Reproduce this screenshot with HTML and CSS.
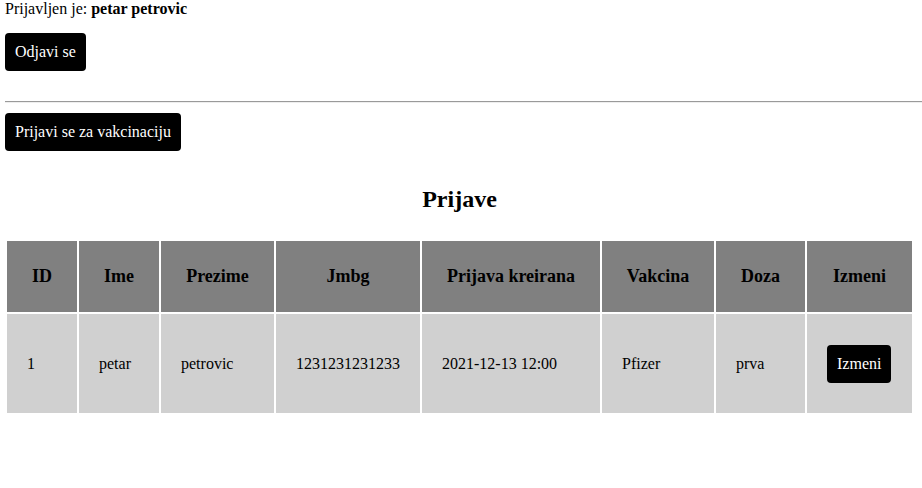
FILE: index.html
```html
<!DOCTYPE html>
<html>
<head>
<meta charset="utf-8">
<link rel="stylesheet" href="styles.css">
</head>
<body>
<div class="user">Prijavljen je: <b>petar petrovic</b></div>
<button class="btn logout">Odjavi se</button>
<hr class="sep">
<button class="btn">Prijavi se za vakcinaciju</button>
<div class="wrap">
  <h2 class="title">Prijave</h2>
  <table class="tbl">
    <thead>
      <tr>
        <th class="c1">ID</th>
        <th class="c2">Ime</th>
        <th class="c3">Prezime</th>
        <th class="c4">Jmbg</th>
        <th class="c5">Prijava kreirana</th>
        <th class="c6">Vakcina</th>
        <th class="c7">Doza</th>
        <th class="c8">Izmeni</th>
      </tr>
    </thead>
    <tbody>
      <tr>
        <td>1</td>
        <td>petar</td>
        <td>petrovic</td>
        <td>1231231231233</td>
        <td>2021-12-13 12:00</td>
        <td>Pfizer</td>
        <td>prva</td>
        <td><button class="btn small">Izmeni</button></td>
      </tr>
    </tbody>
  </table>
</div>
</body>
</html>
```
FILE: styles.css
```css
html, body {
  margin: 0;
  padding: 0;
}
body {
  padding-left: 5px;
  font-family: "Liberation Serif", "Times New Roman", serif;
  font-size: 16px;
  color: #000;
  background: #fff;
}
.user {
  line-height: 18px;
  height: 18px;
}
.btn {
  display: inline-block;
  font-family: "Liberation Serif", "Times New Roman", serif;
  font-size: 16px;
  line-height: 18px;
  color: #fff;
  background: #000;
  border: none;
  border-radius: 4px;
  padding: 10px 10px;
  margin: 0;
  cursor: pointer;
}
.logout {
  margin-top: 15px;
}
.sep {
  margin: 30px 0 10px 0;
  border: none;
  border-top: 1px solid #9a9a9a;
  border-bottom: 1px solid #eeeeee;
  height: 0;
}
.wrap {
  width: 909px;
}
.title {
  font-size: 24px;
  font-weight: bold;
  text-align: center;
  margin: 34px 0 26px 0;
  line-height: 28px;
}
.tbl {
  width: 909px;
  border-collapse: separate;
  border-spacing: 2px;
  margin-left: 0;
}
.tbl th {
  background: #808080;
  font-size: 18px;
  font-weight: bold;
  line-height: 21px;
  padding: 25px 0;
  text-align: center;
}
.tbl td {
  background: #d0d0d0;
  padding: 30px 20px;
  text-align: left;
  line-height: 38px;
  height: 38px;
  vertical-align: middle;
}
.c1 { width: 70px; }
.c2 { width: 80px; }
.c3 { width: 113px; }
.c4 { width: 144px; }
.c5 { width: 178px; }
.c6 { width: 112px; }
.c7 { width: 89px; }
.c8 { width: 105px; }
.small {
  vertical-align: middle;
}
```
